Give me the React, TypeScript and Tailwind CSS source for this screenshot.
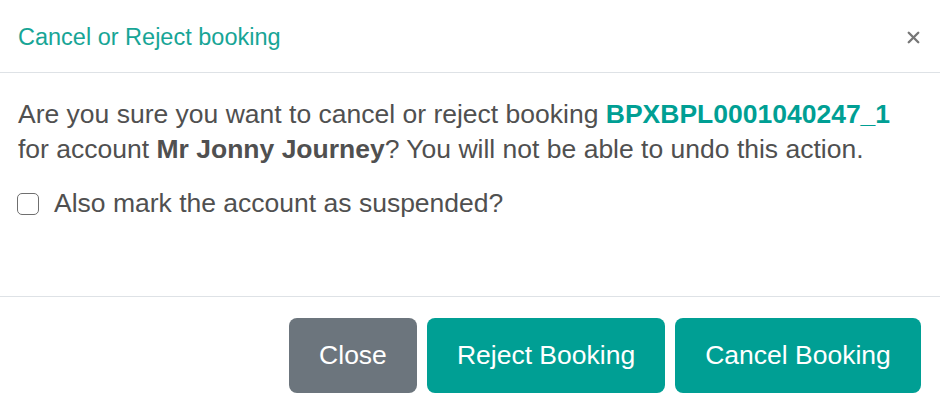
import { X } from "lucide-react";

export default function App() {
  return (
    <div className="h-[413px] w-[940px] overflow-hidden bg-white font-['Liberation_Sans',Arial,sans-serif]">
      <div className="flex h-[73px] items-center justify-between border-b border-[#dee2e6] pl-[18px] pr-[17px] pt-[3px]">
        <h5 className="text-[23.5px] leading-none text-[#17a596]">Cancel or Reject booking</h5>
        <button className="text-[#777]">
          <X className="h-[19px] w-[19px]" strokeWidth={3} />
        </button>
      </div>

      <div className="h-[224px] border-b border-[#dee2e6] px-[18px] pt-[24px] text-[26.5px] leading-[35px] text-[#505050]">
        <p>
          Are you sure you want to cancel or reject booking{" "}
          <span className="font-bold text-[#009f94]">BPXBPL0001040247_1</span> for account{" "}
          <span className="font-bold">Mr Jonny Journey</span>? You will not be able to undo this action.
        </p>
        <label className="mt-[19px] flex items-center gap-[15px]">
          <input
            type="checkbox"
            className="ml-[-1px] h-[22px] w-[22px] shrink-0 appearance-none rounded-[5px] border-[1.5px] border-[#6f6f6f] bg-white"
          />
          <span>Also mark the account as suspended?</span>
        </label>
      </div>

      <div className="flex justify-end gap-[10px] pr-[19px] pt-[21px]">
        <button className="h-[75px] w-[128px] rounded-[8px] bg-[#6c757d] text-[26.5px] text-white">Close</button>
        <button className="h-[75px] w-[238px] rounded-[8px] bg-[#009f94] text-[26.5px] text-white">Reject Booking</button>
        <button className="h-[75px] w-[246px] rounded-[8px] bg-[#009f94] text-[26.5px] text-white">Cancel Booking</button>
      </div>
    </div>
  );
}
